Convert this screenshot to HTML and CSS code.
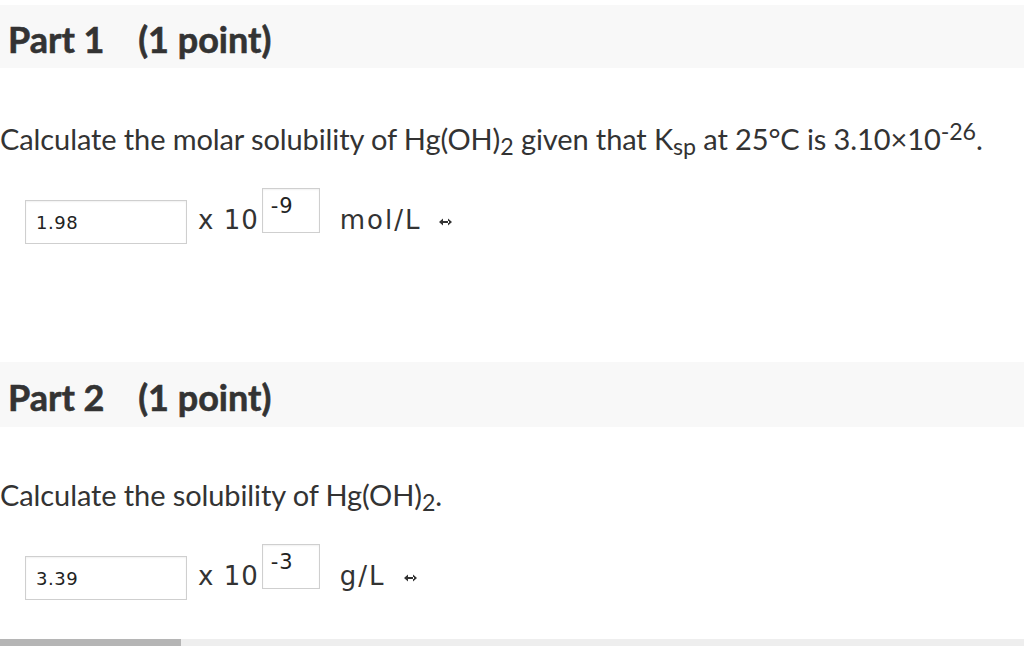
FILE: index.html
```html
<!DOCTYPE html>
<html lang="en">
<head>
    <meta charset="UTF-8">
    <meta name="viewport" content="width=device-width, initial-scale=1.0">
    <title>Solubility of Hg(OH)2</title>
    <link rel="stylesheet" href="styles.css">
</head>
<body>
    <div class="page">
        <div class="part-head">
            <h2>Part 1 <span class="points">(1 point)</span></h2>
        </div>
        <p class="question">Calculate the molar solubility of Hg(OH)<sub>2</sub> given that K<sub>sp</sub> at 25°C is 3.10×10<sup>-26</sup>.</p>
        <div class="answer-row">
            <input class="answer" type="text" value="1.98">
            <span class="times">x 10</span>
            <input class="exponent" type="text" value="-9">
            <span class="unit">mol/L</span>
            <svg class="toggle" width="13" height="8" viewBox="0 0 13 8">
                <path d="M0 4 L4 0.5 L4 7.5 Z M13 4 L9 0.5 L9 7.5 Z M3 3 H10 V5 H3 Z" fill="#333"/>
            </svg>
        </div>

        <div class="part-head second">
            <h2>Part 2 <span class="points">(1 point)</span></h2>
        </div>
        <p class="question second">Calculate the solubility of Hg(OH)<sub>2</sub>.</p>
        <div class="answer-row">
            <input class="answer" type="text" value="3.39">
            <span class="times">x 10</span>
            <input class="exponent" type="text" value="-3">
            <span class="unit">g/L</span>
            <svg class="toggle" width="13" height="8" viewBox="0 0 13 8">
                <path d="M0 4 L4 0.5 L4 7.5 Z M13 4 L9 0.5 L9 7.5 Z M3 3 H10 V5 H3 Z" fill="#333"/>
            </svg>
        </div>

        <div class="hscroll"><div class="thumb"></div></div>
    </div>
</body>
</html>
```

FILE: styles.css
```css
:root {
    --txt-color: #333;
    --head-bg: #f8f8f8;
    --field-border: #cfcfcf;
}

body {
    margin: 0;
    padding: 0;
    background: #fff;
    color: var(--txt-color);
    font-family: Lato, "Open Sans", sans-serif;
    overflow: hidden;
}

.page {
    padding-top: 5px;
    height: 646px;
    box-sizing: border-box;
    display: flex;
    flex-direction: column;
}

.part-head {
    height: 63px;
    box-sizing: border-box;
    background: var(--head-bg);
    display: flex;
    align-items: center;
    padding: 4px 0 0 8px;
}

.part-head.second {
    margin-top: 118px;
    height: 65px;
}

.part-head h2 {
    margin: 0;
    font-size: 36px;
    font-weight: 700;
    line-height: 40px;
    -webkit-text-stroke: 0.6px var(--txt-color);
}

.part-head .points {
    margin-left: 25px;
}

.question {
    margin: 54px 0 0 0;
    font-size: 29px;
    line-height: 34px;
    letter-spacing: -0.1px;
}

.question.second {
    margin-top: 51px;
}

.question sub,
.question sup {
    font-size: 0.8em;
    line-height: 0;
}

.question sub {
    vertical-align: -0.2em;
}

.question sup {
    vertical-align: 0.45em;
}

.answer-row {
    display: flex;
    align-items: flex-end;
    height: 56px;
    margin-top: 32px;
    padding-left: 25px;
    font-family: "DejaVu Sans", sans-serif;
}

.answer-row input {
    box-sizing: border-box;
    border: 1px solid var(--field-border);
    box-shadow: inset 0 1px 2px rgba(0, 0, 0, 0.06);
    font-family: "DejaVu Sans", sans-serif;
    color: #222;
    outline: none;
    margin: 0;
}

.answer-row .answer {
    width: 162px;
    height: 44px;
    padding: 0 0 0 10px;
    font-size: 18px;
    letter-spacing: 0.5px;
}

.answer-row .times {
    font-size: 26px;
    line-height: 28px;
    letter-spacing: 1px;
    margin: 0 3px 10px 11px;
}

.answer-row .exponent {
    width: 58px;
    height: 45px;
    padding: 0 0 9px 8px;
    font-size: 21px;
    letter-spacing: 1px;
    align-self: flex-start;
}

.answer-row .unit {
    font-size: 26px;
    line-height: 28px;
    letter-spacing: 2px;
    margin: 0 0 10px 20px;
}

.answer-row .toggle {
    flex: none;
    margin: 0 0 18px 18px;
}

.hscroll {
    margin-top: auto;
    height: 7px;
    background: #eee;
}

.hscroll > .thumb {
    width: 181px;
    height: 100%;
    background: #b5b5b5;
}
```
